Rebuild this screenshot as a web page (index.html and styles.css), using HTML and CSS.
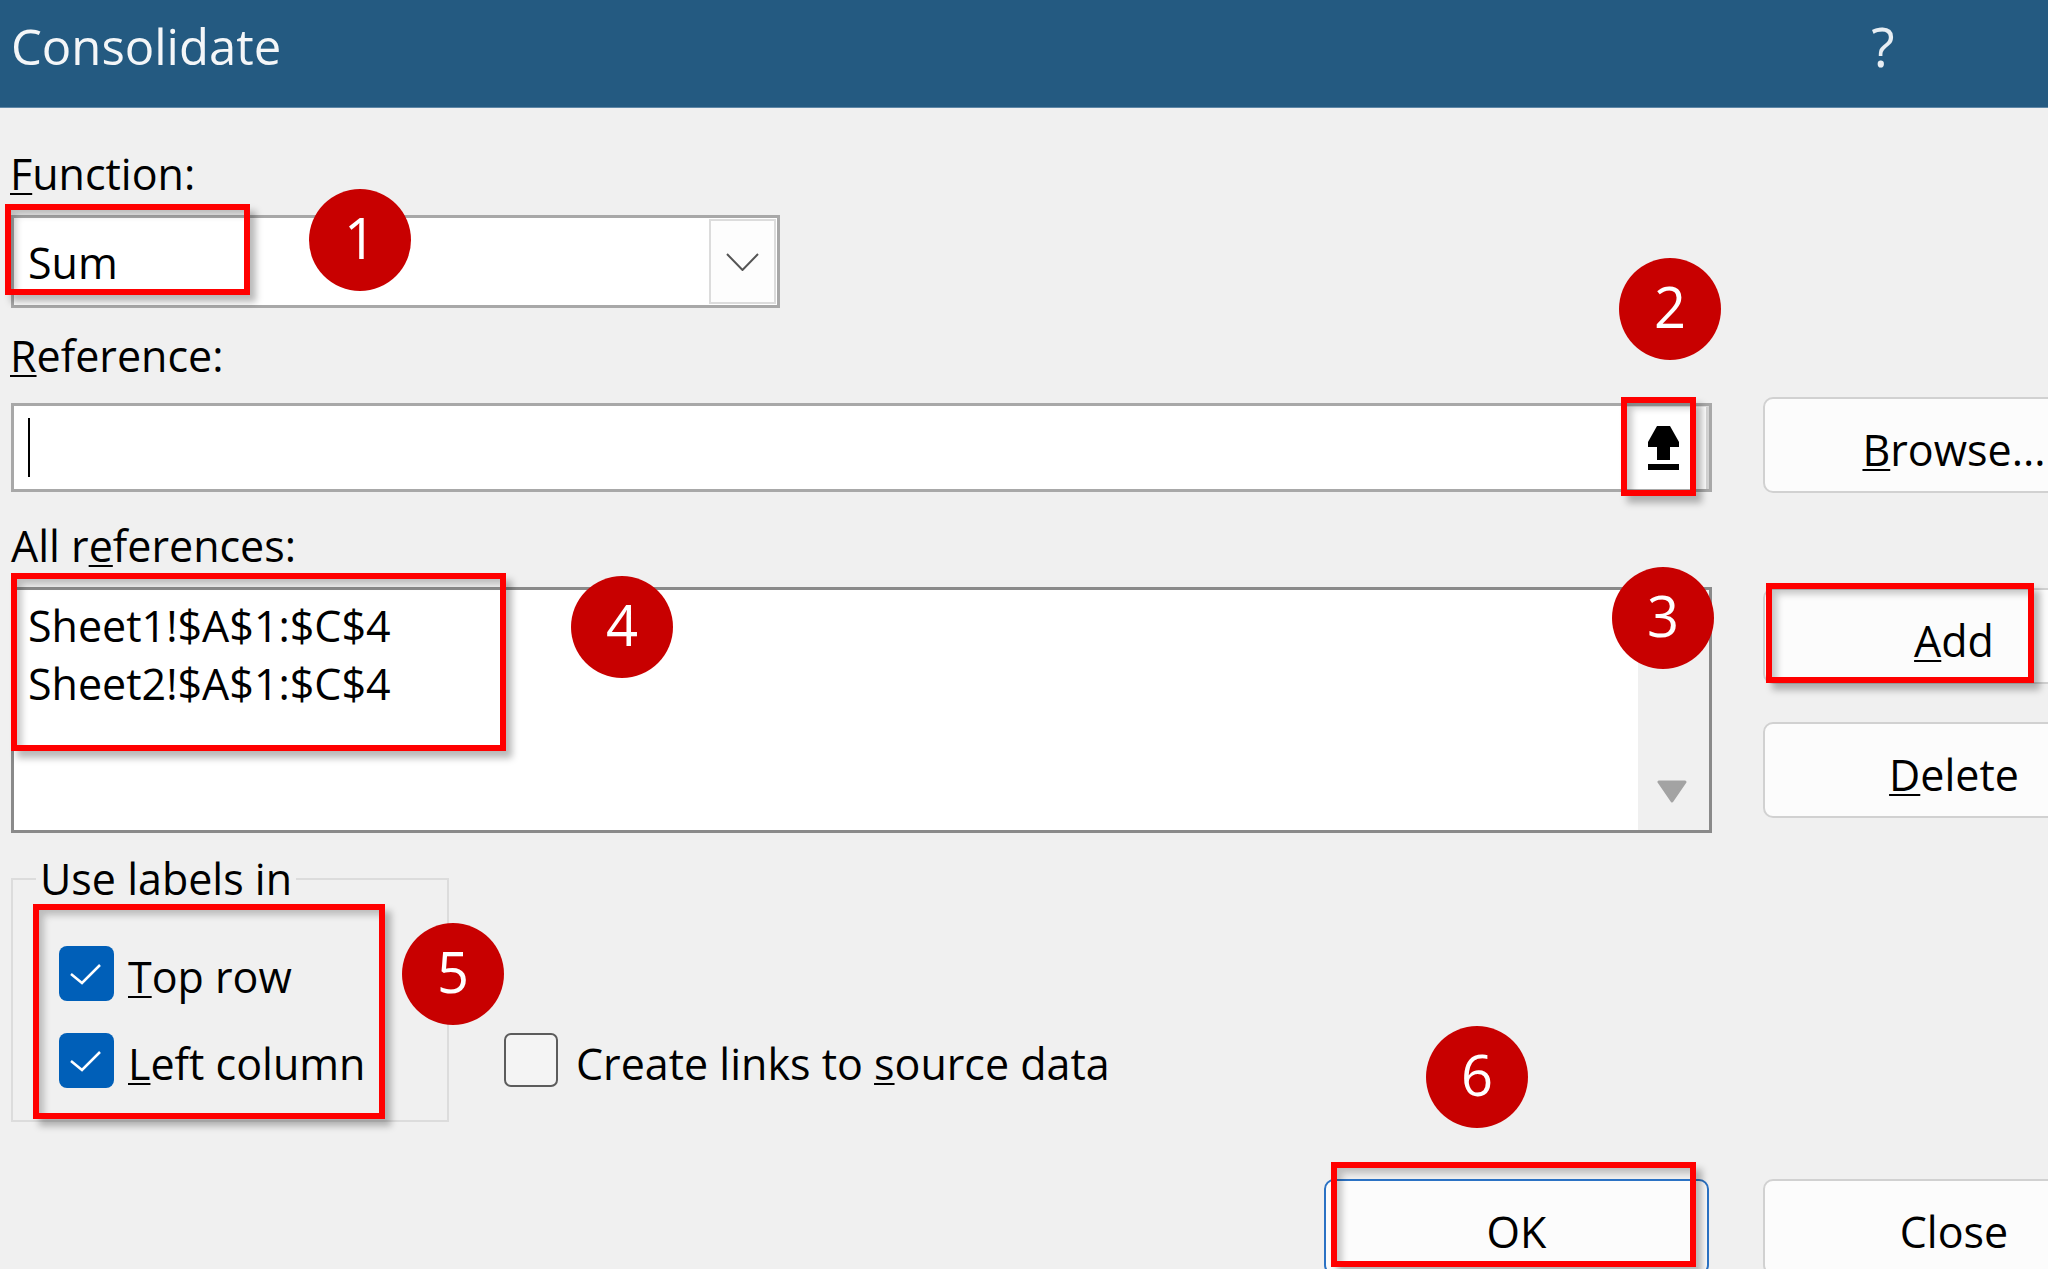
FILE: index.html
```html
<!DOCTYPE html>
<html lang="en">
<head>
<meta charset="utf-8">
<title>Consolidate</title>
<link rel="stylesheet" href="styles.css">
</head>
<body>
<div class="dialog">
  <header class="titlebar">
    <span class="title">Consolidate</span>
    <span class="help">?</span>
  </header>
  <main class="content">
    <section class="fields">
      <div class="lbl lbl-function"><u>F</u>unction:</div>
      <div class="combo">
        <span class="combo-value">Sum</span>
        <span class="combo-btn">
          <svg width="33" height="18" viewBox="0 0 33 18"><polyline points="1,1 16.5,17 32,1" fill="none" stroke="#555" stroke-width="2"/></svg>
        </span>
      </div>
      <div class="lbl lbl-reference"><u>R</u>eference:</div>
      <div class="refinput">
        <span class="caret"></span>
        <span class="collapse-btn">
          <svg width="31" height="44" viewBox="0 0 31 44"><polygon points="9,0 22,0 31,16 31,21 22,21 22,34 9,34 9,21 0,21 0,16" fill="#000"/><rect x="0" y="38" width="31" height="6" fill="#000"/></svg>
        </span>
      </div>
      <div class="lbl lbl-allrefs">All r<u>e</u>ferences:</div>
      <div class="listbox">
        <div class="items">
          <div>Sheet1!$A$1:$C$4</div>
          <div>Sheet2!$A$1:$C$4</div>
        </div>
        <div class="scrollbar">
          <svg width="30" height="23" viewBox="0 0 30 23"><polygon points="2,2 28,2 15,21" fill="#a3a3a3" stroke="#a3a3a3" stroke-width="3" stroke-linejoin="round"/></svg>
        </div>
      </div>
      <div class="options">
        <fieldset class="group">
          <legend>Use labels in</legend>
          <div class="check first">
            <span class="box checked"><svg width="55" height="55" viewBox="0 0 55 55"><path d="M12 28 L23 37 L41 19" fill="none" stroke="#fff" stroke-width="2.5"/></svg></span>
            <span class="txt"><u>T</u>op row</span>
          </div>
          <div class="check second">
            <span class="box checked"><svg width="55" height="55" viewBox="0 0 55 55"><path d="M12 28 L23 37 L41 19" fill="none" stroke="#fff" stroke-width="2.5"/></svg></span>
            <span class="txt"><u>L</u>eft column</span>
          </div>
        </fieldset>
        <div class="check links">
          <span class="box empty"></span>
          <span class="txt">Create links to <u>s</u>ource data</span>
        </div>
      </div>
    </section>
    <aside class="side">
      <button class="btn browse"><u>B</u>rowse...</button>
      <button class="btn add"><u>A</u>dd</button>
      <button class="btn delete"><u>D</u>elete</button>
    </aside>
    <div class="ok-cell"><button class="btn ok">OK</button></div>
    <div class="close-cell"><button class="btn">Close</button></div>
  </main>

  <div class="mark m1"></div>
  <div class="mark m2"></div>
  <div class="mark m3"></div>
  <div class="mark m4"></div>
  <div class="mark m5"></div>
  <div class="mark m6"></div>

  <div class="badge b1">1</div>
  <div class="badge b2">2</div>
  <div class="badge b3">3</div>
  <div class="badge b4">4</div>
  <div class="badge b5">5</div>
  <div class="badge b6">6</div>
</div>
</body>
</html>
```
FILE: styles.css
```css
* { box-sizing: border-box; }
html, body { margin: 0; padding: 0; }
body {
  width: 2048px;
  height: 1269px;
  overflow: hidden;
  background: #f0f0f0;
  font-family: "Open Sans", "Noto Sans", sans-serif;
  color: #000;
}
u {
  text-decoration-thickness: 2px;
  text-underline-offset: 3px;
}
.dialog {
  position: relative;
  width: 2048px;
  height: 1269px;
  overflow: hidden;
}

/* title bar */
.titlebar {
  height: 108px;
  background: #245a81;
  border-bottom: 1px solid #5f87a7;
  display: flex;
  justify-content: space-between;
  align-items: flex-start;
  padding: 13px 135px 0 11px;
  color: #f4f6f8;
}
.title { font-size: 49px; line-height: 67px; }
.help { width: 60px; text-align: center; font-size: 54px; line-height: 67px; color: #e8eef3; }

/* main grid */
.content {
  display: grid;
  grid-template-columns: 1701px 382px;
  grid-template-rows: 1071px auto;
  column-gap: 51px;
  padding-left: 11px;
}
.fields { display: flex; flex-direction: column; align-items: flex-start; }
.lbl { font-size: 43px; line-height: 56px; }
.lbl-function { margin-top: 38px; margin-left: -1px; }
.lbl-reference { margin-top: 20px; margin-left: -1px; }
.lbl-allrefs { margin-top: 26px; }

.combo {
  margin-top: 13px;
  width: 769px;
  height: 93px;
  border: 3px solid #a8a8a8;
  background: #fff;
  display: flex;
  align-items: center;
}
.combo-value { flex: 1; padding: 3px 0 0 14px; font-size: 43px; line-height: 56px; }
.combo-btn {
  width: 67px;
  height: 85px;
  margin-right: 1px;
  border: 2px solid #dcdcdc;
  background: #fdfdfd;
  display: flex;
  align-items: center;
  justify-content: center;
}

.refinput {
  margin-top: 19px;
  width: 1701px;
  height: 89px;
  border: 3px solid #a8a8a8;
  background: #fff;
  display: flex;
  align-items: center;
  padding-left: 14px;
}
.caret { width: 2px; height: 59px; background: #000; }
.collapse-btn {
  margin-left: auto;
  width: 83px;
  height: 83px;
  border-right: 3px solid #d4d4d4;
  border-top: 1px solid #e4e4e4;
  background: #fff;
  display: flex;
  align-items: center;
  padding-left: 22px;
}

.listbox {
  margin-top: 13px;
  width: 1701px;
  height: 246px;
  border: 3px solid #8a8a8a;
  background: #fff;
  display: flex;
}
.items { flex: 1; padding: 7px 0 0 14px; font-size: 43px; line-height: 58px; }
.scrollbar {
  width: 71px;
  background: #f0f0f0;
  display: flex;
  align-items: flex-end;
  justify-content: center;
  padding: 0 4px 27px 0;
}

/* options */
.options { margin-top: 18px; display: flex; align-items: flex-end; }
.group {
  width: 438px;
  margin: 0;
  padding: 0 0 32px 0;
  border: 2px solid #dcdcdc;
  min-width: 0;
}
.group legend {
  margin-left: 23px;
  padding: 0 4px;
  font-size: 43px;
  line-height: 56px;
}
.check {
  display: flex;
  align-items: center;
  gap: 14px;
  height: 56px;
  font-size: 43px;
  line-height: 56px;
}
.check .txt { padding-top: 7px; }
.group .check { margin-left: 46px; }
.check.first { margin-top: 38px; }
.check.second { margin-top: 31px; }
.box { flex: none; width: 55px; height: 55px; border-radius: 8px; }
.box svg { display: block; }
.box.checked { background: #005fb8; }
.box.empty { width: 54px; height: 54px; border: 2px solid #5c5c5c; background: #f4f4f4; border-radius: 7px; }
.links { margin-left: 55px; margin-bottom: 34px; gap: 18px; }

/* buttons */
.side { display: flex; flex-direction: column; }
.btn {
  font-family: inherit;
  font-size: 43px;
  line-height: 56px;
  width: 382px;
  height: 96px;
  padding: 10px 0 0 0;
  background: #fcfcfc;
  border: 2px solid #d1d1d1;
  border-radius: 10px;
  color: #000;
  text-align: center;
}
.browse { margin-top: 289px; }
.add { margin-top: 95px; }
.delete { margin-top: 38px; }
.ok-cell { display: flex; justify-content: flex-end; padding-right: 3px; }
.btn.ok { width: 385px; border-color: #2b72c4; }

/* annotation overlays */
.mark {
  position: absolute;
  border: 6px solid #ff0000;
  box-shadow: 6px 7px 7px rgba(0, 0, 0, 0.28), inset 7px 7px 7px -2px rgba(0, 0, 0, 0.22);
}
.m1 { left: 5px; top: 204px; width: 245px; height: 91px; }
.m2 { left: 1621px; top: 397px; width: 75px; height: 99px; }
.m3 { left: 1766px; top: 583px; width: 268px; height: 100px; }
.m4 { left: 11px; top: 573px; width: 495px; height: 178px; }
.m5 { left: 33px; top: 904px; width: 352px; height: 215px; }
.m6 { left: 1331px; top: 1162px; width: 365px; height: 105px; }

.badge {
  position: absolute;
  width: 102px;
  height: 102px;
  border-radius: 50%;
  background: #c80000;
  color: #fff;
  font-size: 56px;
  line-height: 96px;
  text-align: center;
}
.b1 { left: 309px; top: 189px; }
.b2 { left: 1619px; top: 258px; }
.b3 { left: 1612px; top: 567px; }
.b4 { left: 571px; top: 576px; }
.b5 { left: 402px; top: 923px; }
.b6 { left: 1426px; top: 1026px; }
```
